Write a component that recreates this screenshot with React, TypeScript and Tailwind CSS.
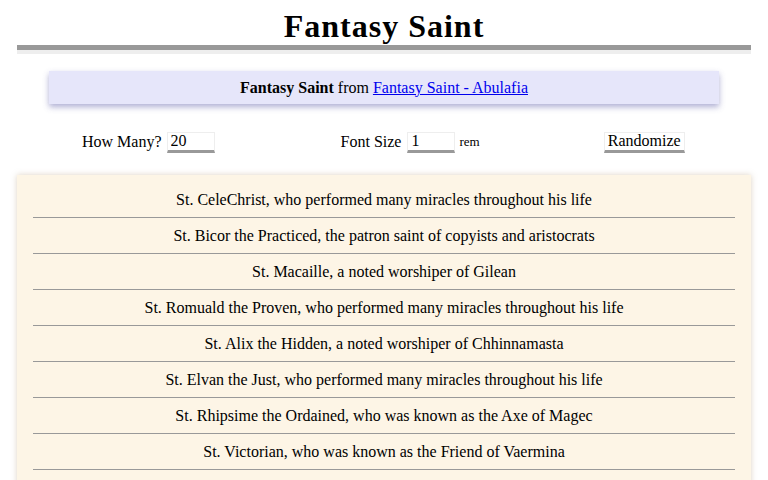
const saints = [
  "St. CeleChrist, who performed many miracles throughout his life",
  "St. Bicor the Practiced, the patron saint of copyists and aristocrats",
  "St. Macaille, a noted worshiper of Gilean",
  "St. Romuald the Proven, who performed many miracles throughout his life",
  "St. Alix the Hidden, a noted worshiper of Chhinnamasta",
  "St. Elvan the Just, who performed many miracles throughout his life",
  "St. Rhipsime the Ordained, who was known as the Axe of Magec",
  "St. Victorian, who was known as the Friend of Vaermina",
  "St. Ninian the Meek, the patron saint of bakers and sailors",
];

export default function App() {
  return (
    <div className="min-h-[480px] bg-white font-['Liberation_Serif',serif] text-[16px] text-black">
      <h1 className="mx-[17px] border-b-[5px] border-[#999] pt-[7px] pb-0 text-center text-[32px] font-bold leading-[38px] tracking-[1px] shadow-[0_4px_0_#eeeeee]">
        Fantasy Saint
      </h1>

      <div className="mx-[49px] mt-[21px] flex h-[33px] items-center justify-center bg-[#e6e6fa] shadow-[0_3px_6px_rgba(80,80,160,0.45)]">
        <span>
          <b>Fantasy Saint</b> from{" "}
          <a href="#" className="text-[#0000ee] underline">
            Fantasy Saint - Abulafia
          </a>
        </span>
      </div>

      <div className="mt-[27px] flex h-[22px] items-center">
        <div className="ml-[82px] flex items-center">
          <span>How Many?</span>
          <input
            defaultValue="20"
            className="ml-[5px] h-[21px] w-[48px] border border-b-[3px] border-[#eee] border-b-[#999] px-[3px] font-['Liberation_Serif',serif] text-[16px] leading-[16px] outline-none"
          />
        </div>
        <div className="ml-[126px] flex items-center">
          <span>Font Size</span>
          <input
            defaultValue="1"
            className="ml-[6px] h-[21px] w-[48px] border border-b-[3px] border-[#eee] border-b-[#999] px-[3px] font-['Liberation_Serif',serif] text-[16px] leading-[16px] outline-none"
          />
          <span className="ml-[4px] text-[13px]">rem</span>
        </div>
        <button className="ml-[124px] h-[21px] w-[81px] border border-b-[3px] border-[#eee] border-b-[#999] bg-white text-center font-['Liberation_Serif',serif] text-[16px] leading-[16px]">
          Randomize
        </button>
      </div>

      <div className="mx-[17px] mt-[22px] bg-[#fdf5e6] px-4 pt-[7px] shadow-[0_0_6px_rgba(160,130,90,0.35)]">
        {saints.map((s) => (
          <div key={s} className="border-b border-[#999] py-[9px] text-center leading-[17px]">
            {s}
          </div>
        ))}
      </div>
    </div>
  );
}
